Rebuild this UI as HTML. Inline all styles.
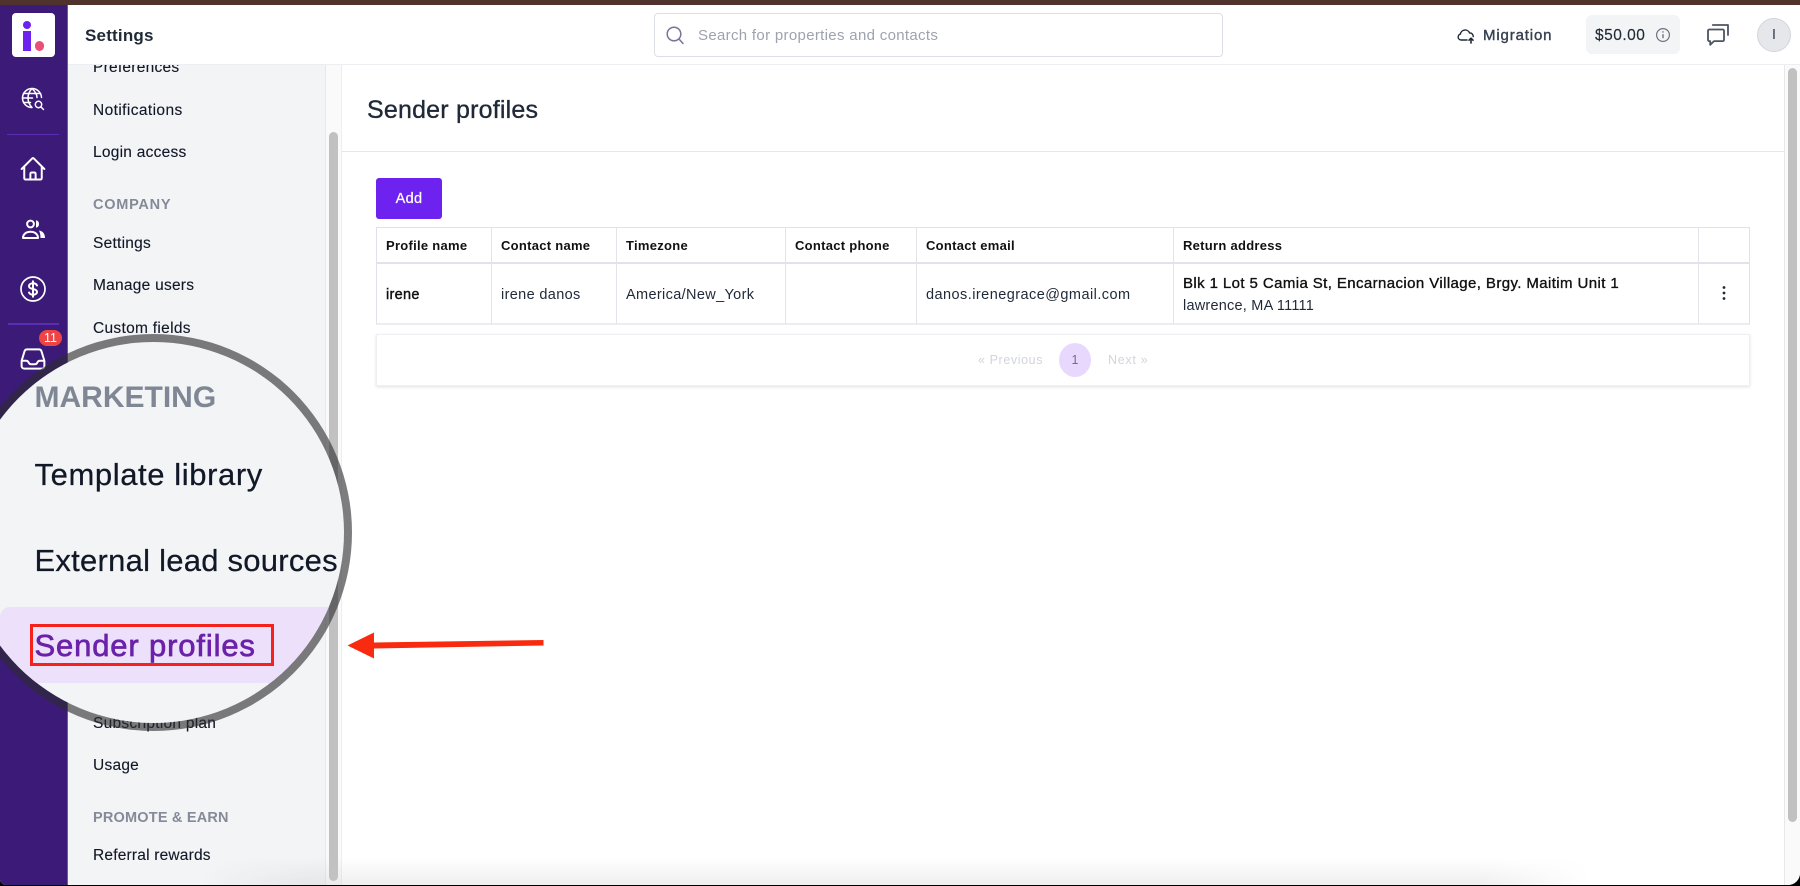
<!DOCTYPE html>
<html lang="en"><head><meta charset="utf-8"><title>Sender profiles</title>
<style>
html,body{margin:0;padding:0;width:1800px;height:886px;overflow:hidden;background:#000;font-family:"Liberation Sans",sans-serif;color:#111827}
div,svg,span{position:absolute;box-sizing:border-box}
.t{white-space:nowrap;line-height:20px;height:20px}
.nav{left:93px;font-size:15.5px;letter-spacing:.25px;color:#111827;-webkit-text-stroke:.12px #111827}
.sec{left:93px;font-size:14.5px;font-weight:bold;letter-spacing:.45px;color:#848a97}
.th{font-size:13px;font-weight:bold;letter-spacing:.28px;top:236px;color:#111}
.td{font-size:14.5px;letter-spacing:.3px;color:#1f2937}
.vl{width:1px;background:#e3e4ea;top:227px;height:97px}
.ic{fill:none;stroke:#fff;stroke-width:1.7;stroke-linecap:round;stroke-linejoin:round}
</style></head><body>
<div id="app" style="left:0;top:0;width:1800px;height:885px;background:#fff;overflow:hidden;border-radius:0 0 12px 6px">
  <div style="left:0;top:0;width:1800px;height:5px;background:#4f332c"></div>

  <!-- main -->
  <div style="left:342px;top:65px;width:1442px;height:820px;background:#fff"></div>
  <div class="t" style="left:367px;top:100px;font-size:25px;letter-spacing:.2px;color:#1f2937;-webkit-text-stroke:.35px #1f2937">Sender profiles</div>
  <div style="left:342px;top:151px;width:1442px;height:1px;background:#e5e7eb"></div>
  <div style="left:376px;top:178px;width:66px;height:41px;background:#6d22f0;border-radius:3px"></div>
  <div class="t" style="left:376px;top:189px;width:66px;text-align:center;color:#fff;font-size:14.5px;letter-spacing:.3px;-webkit-text-stroke:.25px #fff">Add</div>

  <!-- table -->
  <div style="left:376px;top:227px;width:1374px;height:98px;border:1.5px solid #e1e2e9;border-bottom:2px solid #ecedf1"></div>
  <div style="left:376px;top:262px;width:1374px;height:2px;background:#e2e3ea"></div>
  <div class="vl" style="left:491px"></div><div class="vl" style="left:616px"></div><div class="vl" style="left:785px"></div><div class="vl" style="left:916px"></div><div class="vl" style="left:1173px"></div><div class="vl" style="left:1698px"></div>
  <div class="t th" style="left:386px">Profile name</div>
  <div class="t th" style="left:501px">Contact name</div>
  <div class="t th" style="left:626px">Timezone</div>
  <div class="t th" style="left:795px">Contact phone</div>
  <div class="t th" style="left:926px">Contact email</div>
  <div class="t th" style="left:1183px">Return address</div>
  <div class="t td" style="left:386px;top:285px;color:#111;-webkit-text-stroke:.4px #111">irene</div>
  <div class="t td" style="left:501px;top:285px;letter-spacing:.35px">irene danos</div>
  <div class="t td" style="left:626px;top:285px;letter-spacing:.35px">America/New_York</div>
  <div class="t td" style="left:926px;top:285px;letter-spacing:.45px">danos.irenegrace@gmail.com</div>
  <div class="t td" style="left:1183px;top:274px;font-size:15px;letter-spacing:.4px;color:#111;-webkit-text-stroke:.35px #111">Blk 1 Lot 5 Camia St, Encarnacion Village, Brgy. Maitim Unit 1</div>
  <div class="t td" style="left:1183px;top:296px;letter-spacing:.22px">lawrence, MA 11111</div>
  <svg style="left:1716px;top:283px" width="16" height="20" viewBox="0 0 16 20"><circle cx="8" cy="4.5" r="1.4" fill="#1f2937"/><circle cx="8" cy="10" r="1.4" fill="#1f2937"/><circle cx="8" cy="15.5" r="1.4" fill="#1f2937"/></svg>

  <!-- pagination -->
  <div style="left:376px;top:334px;width:1374px;height:52px;background:#fff;border:1px solid #f0f0f3;box-shadow:0 1px 3px rgba(0,0,0,.12)"></div>
  <div class="t" style="left:978px;top:350px;font-size:12.5px;letter-spacing:.6px;color:#d1d5db">« Previous</div>
  <div style="left:1059px;top:343px;width:32px;height:34px;background:#e9d8fd;border-radius:50%"></div>
  <div class="t" style="left:1059px;top:350px;width:32px;text-align:center;font-size:12.5px;color:#6b7280">1</div>
  <div class="t" style="left:1108px;top:350px;font-size:12.5px;letter-spacing:.7px;color:#d1d5db">Next »</div>

  <!-- right scrollbar -->
  <div style="left:1784px;top:65px;width:16px;height:820px;background:#fafafa;border-left:1px solid #e8e8e8"></div>
  <div style="left:1788px;top:68px;width:9px;height:754px;background:#c1c1c1;border-radius:5px"></div>

  <!-- sidebar -->
  <div style="left:68px;top:64px;width:257px;height:821px;background:#f3f4f6"></div>
  <div class="t nav" style="top:58px">Preferences</div>
  <div class="t nav" style="top:101px;letter-spacing:.4px">Notifications</div>
  <div class="t nav" style="top:143px">Login access</div>
  <div class="t sec" style="top:195px;letter-spacing:.75px">COMPANY</div>
  <div class="t nav" style="top:234px">Settings</div>
  <div class="t nav" style="top:276px">Manage users</div>
  <div class="t nav" style="top:319px;letter-spacing:.3px">Custom fields</div>
  <div class="t nav" style="top:714px">Subscription plan</div>
  <div class="t nav" style="top:756px">Usage</div>
  <div class="t sec" style="top:808px;letter-spacing:.2px">PROMOTE &amp; EARN</div>
  <div class="t nav" style="top:846px;letter-spacing:.2px">Referral rewards</div>
  <div style="left:325px;top:64px;width:17px;height:821px;background:#fafafa;border-left:1px solid #e8e8e8;border-right:1px solid #eee"></div>
  <div style="left:329px;top:132px;width:9px;height:749px;background:#c1c1c1;border-radius:5px"></div>

  <!-- bottom smudge -->
  <div style="left:200px;top:858px;width:1390px;height:27px;background:linear-gradient(rgba(200,200,204,0),rgba(200,200,204,.3));-webkit-mask-image:linear-gradient(90deg,transparent,#000 8%,#000 92%,transparent);mask-image:linear-gradient(90deg,transparent,#000 8%,#000 92%,transparent)"></div>

  <!-- header -->
  <div style="left:67px;top:5px;width:1733px;height:60px;background:#fff;border-bottom:1px solid #eceef1"></div>
  <div class="t" style="left:85px;top:26px;font-size:17px;font-weight:bold;letter-spacing:.2px;color:#1f2937">Settings</div>
  <div style="left:654px;top:13px;width:569px;height:44px;border:1.5px solid #dddfe6;border-radius:4px;background:#fff"></div>
  <svg style="left:664px;top:24px" width="22" height="22" viewBox="0 0 22 22"><circle cx="10" cy="10" r="6.8" fill="none" stroke="#7d7396" stroke-width="1.5"/><path d="M15 15l4 4.5" stroke="#7d7396" stroke-width="1.5" fill="none" stroke-linecap="round"/></svg>
  <div class="t" style="left:698px;top:26px;font-size:15px;letter-spacing:.32px;color:#9ca3af">Search for properties and contacts</div>

  <svg style="left:1456px;top:26px" width="20" height="18" viewBox="0 0 20 18" fill="none" stroke="#1f2937" stroke-width="1.4" stroke-linecap="round" stroke-linejoin="round"><path d="M11 14H5a3 3 0 0 1-.6-5.9A4.8 4.8 0 0 1 13.6 7a3.3 3.3 0 0 1 3.6 3.7"/><path d="M15 17v-4.5M13 14.2l2-2 2 2" stroke-width="1.6"/></svg>
  <div class="t" style="left:1483px;top:26px;font-size:15px;letter-spacing:.85px;color:#374151;-webkit-text-stroke:.4px #374151">Migration</div>
  <div style="left:1586px;top:15px;width:94px;height:39px;background:#f3f4f6;border-radius:6px"></div>
  <div class="t" style="left:1595px;top:26px;font-size:15.5px;letter-spacing:.5px;color:#1f2937;-webkit-text-stroke:.15px #1f2937">$50.00</div>
  <svg style="left:1655px;top:27px" width="16" height="16" viewBox="0 0 16 16" fill="none" stroke="#6b7280" stroke-width="1.2"><circle cx="8" cy="8" r="6.4"/><path d="M8 7.2v4" stroke-width="1.4"/><circle cx="8" cy="4.9" r=".8" fill="#6b7280" stroke="none"/></svg>
  <svg style="left:1706px;top:23px" width="25" height="23" viewBox="0 0 25 23" fill="none" stroke="#4b5563" stroke-width="1.8" stroke-linejoin="round" stroke-linecap="round"><path d="M3.200 6.500h13.600a1.200 1.200 0 0 1 1.200 1.200v9.200a1.200 1.200 0 0 1-1.200 1.200H8L4.200 21.800v-3.700h-1A1.200 1.200 0 0 1 2 16.900V7.700a1.200 1.200 0 0 1 1.200-1.200z"/><path d="M6.800 2H22v10"/></svg>
  <div style="left:1757px;top:18px;width:34px;height:34px;border-radius:50%;background:#e5e7eb;border:1px solid #d1d5db"></div>
  <div class="t" style="left:1757px;top:25px;width:34px;text-align:center;font-size:15px;color:#374151">I</div>

  <!-- rail -->
  <div style="left:0;top:5px;width:68px;height:880px;background:#3b1a78;border-right:1px solid #6d5aa0"></div>
  <div style="left:12px;top:13px;width:43px;height:44px;background:#fff;border-radius:4px"></div>
  <div style="left:23px;top:20.5px;width:8px;height:8px;border-radius:50%;background:#6d22f0"></div>
  <div style="left:23px;top:30.5px;width:8px;height:20px;background:#6d22f0"></div>
  <div style="left:34.500px;top:41px;width:9.500px;height:9.500px;border-radius:50%;background:#ea4f78"></div>

  <svg class="ic" style="left:21px;top:87px;stroke-width:1.5" width="24" height="24" viewBox="0 0 24 24"><path d="M20.500 10.500A9.500 9.500 0 1 0 10.500 20.500"/><path d="M1.500 11h10M2.500 6.500h17M2.500 15.500h7"/><path d="M11 1.500c-5.300 5.500-5.300 13.500 0 19M11 1.500c3.300 3.200 5 6.600 5 9"/><circle cx="17.500" cy="17.500" r="3.200"/><path d="M20 20l2.500 2.500"/></svg>
  <div style="left:7px;top:134px;width:52px;height:1px;background:#5a2db3"></div>
  <svg class="ic" style="left:19px;top:155px" width="28" height="28" viewBox="0 0 24 24"><path d="M2.250 12l8.954-8.955c.44-.439 1.152-.439 1.591 0L21.750 12M4.500 9.750v10.125c0 .621.504 1.125 1.125 1.125H9.750v-4.875c0-.621.504-1.125 1.125-1.125h2.250c.621 0 1.125.504 1.125 1.125V21h4.125c.621 0 1.125-.504 1.125-1.125V9.750M8.250 21h8.250"/></svg>
  <svg style="left:21px;top:218px" width="25" height="22" viewBox="0 0 25 22"><circle cx="9.500" cy="6" r="3.400" fill="none" stroke="#fff" stroke-width="2"/><path d="M15 2.200a3.900 3.900 0 0 1 0 7.600z" fill="#fff"/><path d="M2 20c0-4 3.300-6.200 7.500-6.200S17 16 17 20z" fill="none" stroke="#fff" stroke-width="2" stroke-linejoin="round"/><path d="M18 12.500c3.500.5 6 3 6 7.500h-4.500c0-3-.5-5.500-1.500-7.500z" fill="#fff"/></svg>
  <svg class="ic" style="left:19px;top:275px" width="28" height="28" viewBox="0 0 28 28"><circle cx="14" cy="14" r="12"/><path stroke-width="2" d="M18 10.500c-.7-1.500-2.200-2.200-4-2.200-2.300 0-4 1.200-4 2.800s1.500 2.400 4 2.900 4 1.200 4 2.900-1.700 2.800-4 2.800c-1.800 0-3.300-.7-4-2.200M14 6.300v15.400"/></svg>
  <div style="left:8px;top:323px;width:51px;height:1.500px;background:#5a2db3"></div>
  <svg class="ic" style="left:19px;top:345px" width="28" height="28" viewBox="0 0 24 24"><path d="M2.250 13.500h3.860a2.250 2.250 0 012.012 1.244l.256.512a2.250 2.250 0 002.013 1.244h3.218a2.250 2.250 0 002.013-1.244l.256-.512a2.250 2.250 0 012.013-1.244h3.859m-19.500.338V18a2.250 2.250 0 002.250 2.250h15A2.250 2.250 0 0021.750 18v-4.162c0-.224-.034-.447-.1-.661L19.240 5.338a2.250 2.250 0 00-2.150-1.588H6.911a2.250 2.250 0 00-2.150 1.588L2.350 13.177a2.250 2.250 0 00-.1.661z"/></svg>
  <div style="left:39px;top:330px;width:23px;height:16px;border-radius:8px;background:#ef4444"></div>
  <div class="t" style="left:39px;top:328px;width:23px;text-align:center;color:#fff;font-size:12.500px">11</div>

  <!-- magnifier -->
  <div style="left:-45.500px;top:334px;width:397px;height:397px;border-radius:50%;border:8.500px solid rgba(45,45,48,.62);background:#f3f4f6;background-clip:padding-box;overflow:hidden">
    <div style="left:37px;top:-342.500px;width:400px;height:886px">
      <div style="left:0;top:607px;width:345px;height:76px;background:#ede0fb;border-radius:10px 0 0 10px"></div>
      <div class="t" style="left:35px;top:388px;font-size:30px;line-height:20px;font-weight:bold;color:#7f8694">MARKETING</div>
      <div class="t" style="left:35px;top:465px;font-size:31px;letter-spacing:.6px;color:#111827;-webkit-text-stroke:.25px #111827">Template library</div>
      <div class="t" style="left:35px;top:551px;font-size:31px;letter-spacing:.25px;color:#111827;-webkit-text-stroke:.25px #111827">External lead sources</div>
      <div class="t" style="left:35px;top:636px;font-size:31px;letter-spacing:.85px;color:#6b21a8;-webkit-text-stroke:.7px #6b21a8">Sender profiles</div>
      <div style="left:30px;top:624px;width:244px;height:42px;border:3px solid #f5211b"></div>
    </div>
  </div>

  <!-- arrow -->
  <svg style="left:340px;top:625px" width="210" height="36" viewBox="0 0 210 36"><path d="M7.500 20.500L34 7.500V17.500L203.500 15V20.500L34 23.500V33.500Z" fill="#f82a10"/></svg>
</div>
</body></html>
